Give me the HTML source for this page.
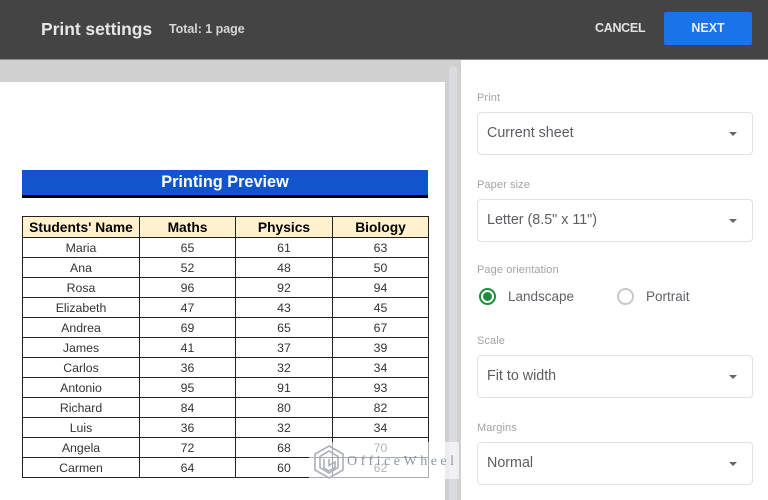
<!DOCTYPE html>
<html><head><meta charset="utf-8">
<style>
html,body{margin:0;padding:0}
body{width:768px;height:500px;overflow:hidden;position:relative;background:#d0d0d0;font-family:"Liberation Sans",sans-serif}
div{position:absolute;white-space:nowrap}
.lab{left:477px;font-size:11px;color:#a3a3a3;line-height:14px;letter-spacing:.1px}
.sel{left:477px;width:274px;height:41px;border:1px solid #dfe1e5;border-radius:4px;background:#fff}
.sel span{position:absolute;left:9px;top:0;line-height:41px;font-size:14.3px;color:#5a5d61}
.sel i{position:absolute;left:251px;top:19px;width:0;height:0;border-left:4px solid transparent;border-right:4px solid transparent;border-top:4px solid #666}
table{position:absolute;left:22px;top:216px;width:406px;border-collapse:collapse;table-layout:fixed;font-size:12.3px;color:#333;text-align:center}
td,th{border:1px solid #222;padding:0;overflow:hidden}
th{background:#fff2cc;color:#000;font-size:13.8px;height:20px}
td{height:18px;padding-top:1px}
</style></head><body>
<div style="left:0;top:0;width:768px;height:59px;background:#444"></div>
<div style="left:0;top:59px;width:768px;height:1px;background:#8a8a8a"></div>
<div style="left:41px;top:18px;font-size:17.5px;font-weight:bold;color:#e6e6e6;line-height:23px;letter-spacing:-.05px">Print settings</div>
<div style="left:169px;top:21px;font-size:12.5px;font-weight:bold;color:#d6d6d6;line-height:17px;letter-spacing:-.04px">Total: 1 page</div>
<div style="left:595px;top:20px;font-size:12.5px;font-weight:bold;color:#e2e2e2;line-height:17px;letter-spacing:-.3px">CANCEL</div>
<div style="left:664px;top:12px;width:88px;height:33px;background:#1a73e8;border-radius:2px;color:#e8f0fe;font-size:12.5px;font-weight:bold;line-height:33px;text-align:center">NEXT</div>

<div style="left:0;top:82px;width:445px;height:418px;background:#fff"></div>
<div style="left:449px;top:66px;width:8px;height:434px;background:#d9dbe0;border-radius:4px 4px 0 0"></div>
<div style="left:461px;top:60px;width:307px;height:440px;background:#fff"></div>

<div style="left:22px;top:170px;width:406px;height:25px;background:#1155cc;color:#fff;font-size:16.3px;font-weight:bold;line-height:25px;text-align:center">Printing Preview</div>
<div style="left:22px;top:195px;width:406px;height:3px;background:#000"></div>

<table>
<colgroup><col style="width:117px"><col style="width:96px"><col style="width:97px"><col style="width:96px"></colgroup>
<tr><th>Students' Name</th><th>Maths</th><th>Physics</th><th>Biology</th></tr>
<tr><td>Maria</td><td>65</td><td>61</td><td>63</td></tr>
<tr><td>Ana</td><td>52</td><td>48</td><td>50</td></tr>
<tr><td>Rosa</td><td>96</td><td>92</td><td>94</td></tr>
<tr><td>Elizabeth</td><td>47</td><td>43</td><td>45</td></tr>
<tr><td>Andrea</td><td>69</td><td>65</td><td>67</td></tr>
<tr><td>James</td><td>41</td><td>37</td><td>39</td></tr>
<tr><td>Carlos</td><td>36</td><td>32</td><td>34</td></tr>
<tr><td>Antonio</td><td>95</td><td>91</td><td>93</td></tr>
<tr><td>Richard</td><td>84</td><td>80</td><td>82</td></tr>
<tr><td>Luis</td><td>36</td><td>32</td><td>34</td></tr>
<tr><td>Angela</td><td>72</td><td>68</td><td>70</td></tr>
<tr><td>Carmen</td><td>64</td><td>60</td><td>62</td></tr>
</table>

<div class="lab" style="top:91px">Print</div>
<div class="sel" style="top:112px"><span>Current sheet</span><i></i></div>
<div class="lab" style="top:178px">Paper size</div>
<div class="sel" style="top:199px"><span>Letter (8.5" x 11")</span><i></i></div>
<div class="lab" style="top:263px">Page orientation</div>
<div style="left:479px;top:288px;width:13px;height:13px;border:2px solid #1e8e3e;border-radius:50%"></div>
<div style="left:483px;top:292px;width:9px;height:9px;background:#1e8e3e;border-radius:50%"></div>
<div style="left:508px;top:288px;font-size:13.5px;line-height:17px;color:#5f6368">Landscape</div>
<div style="left:617px;top:288px;width:13px;height:13px;border:2px solid #c8c8c8;border-radius:50%"></div>
<div style="left:646px;top:288px;font-size:13.5px;line-height:17px;color:#5f6368">Portrait</div>
<div class="lab" style="top:334px">Scale</div>
<div class="sel" style="top:355px"><span>Fit to width</span><i></i></div>
<div class="lab" style="top:421px">Margins</div>
<div class="sel" style="top:442px"><span>Normal</span><i></i></div>

<div style="left:309px;top:442px;width:150px;height:37px;background:rgba(255,255,255,.62)"></div>
<svg style="position:absolute;left:313px;top:444px" width="32" height="36" viewBox="0 0 32 36" fill="none" stroke="#a8b0bc" stroke-width="1.6">
<path d="M16 2L30 10V26L16 34L2 26V10Z"/>
<path d="M16 7L25 12.500V23.500L16 29L7 23.500V12.500Z"/>
<path d="M11 15V24L16 27L22 23.500V18L16 21.500V15"/>
</svg>
<div style="left:347px;top:453px;font-family:'Liberation Serif',serif;font-size:14px;line-height:18px;letter-spacing:3.5px;color:#8e97a6">OfficeWheel</div>
</body></html>
